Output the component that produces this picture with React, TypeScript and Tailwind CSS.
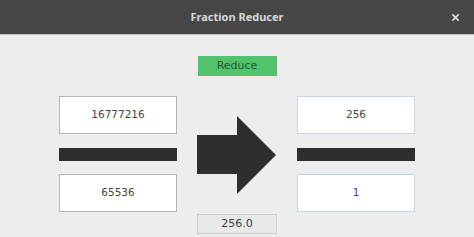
import { X } from "lucide-react";

const Field = ({ value, tone }: { value: string; tone: "gray" | "blue" }) => (
  <div
    className={`h-[38px] w-[118px] flex items-center justify-center bg-white border text-[10.5px] text-[#454545] ${
      tone === "gray" ? "border-[#b4b4b4]" : "border-[#c6d6e6]"
    }`}
  >
    {value}
  </div>
);

const Bar = () => <div className="h-[13px] w-[118px] bg-[#2e2e2e]" />;

const App = () => {
  return (
    <div
      className="w-[474px] h-[237px] flex flex-col bg-[#ededed] overflow-hidden"
      style={{ fontFamily: '"DejaVu Sans", sans-serif' }}
    >
      {/* Title bar */}
      <div className="h-[35px] bg-[#464646] flex items-center justify-center relative border-b border-[#c4c4c4] shrink-0">
        <span
          className="text-[11px] font-bold text-[#d8d8d8]"
          style={{ fontFamily: '"Noto Sans", sans-serif' }}
        >
          Fraction Reducer
        </span>
        <X className="absolute right-[13px] top-[12px] w-[11px] h-[11px] text-[#e8e8e8]" strokeWidth={3.5} />
      </div>

      <div className="flex flex-col items-center pt-[21px]">
        <button className="w-[79px] h-[20px] bg-[#50c36c] text-[11px] text-[#2a5434] flex items-center justify-center">
          Reduce
        </button>

        <div className="flex gap-[20px] mt-[20px]">
          <div className="flex flex-col">
            <Field value="16777216" tone="gray" />
            <div className="mt-[14px] mb-[13px]">
              <Bar />
            </div>
            <Field value="65536" tone="gray" />
          </div>

          <div className="w-[80px] flex flex-col">
            <div className="h-[116px] flex items-center">
              <svg width="80" height="80" viewBox="0 0 80 80">
                <path d="M0 21 H40 V2 L79 41 L40 80 V60 H0 Z" fill="#2e2e2e" />
              </svg>
            </div>
            <div className="mt-[2px] h-[20px] w-[80px] bg-[#e9e9e9] border border-[#c9cdd2] flex items-center justify-center text-[11px] text-[#3c3c3c]">
              256.0
            </div>
          </div>

          <div className="flex flex-col">
            <Field value="256" tone="blue" />
            <div className="mt-[14px] mb-[13px]">
              <Bar />
            </div>
            <Field value="1" tone="blue" />
          </div>
        </div>
      </div>
    </div>
  );
};

export default App;
